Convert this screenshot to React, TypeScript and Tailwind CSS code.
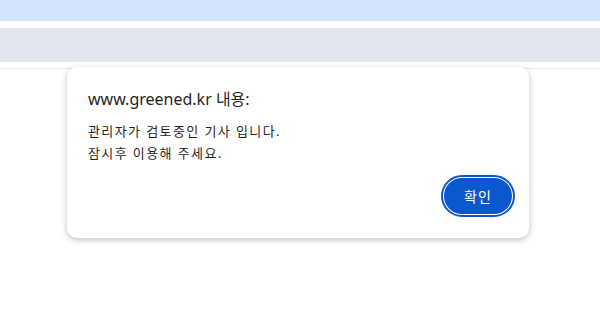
export default function App() {
  return (
    <div className="relative h-[317px] w-[600px] overflow-hidden bg-white font-['Noto_Sans','Noto_Sans_CJK_KR',sans-serif]">
      <div className="h-[21px] bg-[#d3e3fd]" />
      <div className="h-[7px] bg-white" />
      <div className="h-[34px] bg-[#e3e7ed]" />
      <div className="mt-[6px] h-px bg-[#e5e7eb]" />

      <div className="absolute left-[67px] top-[67px] flex h-[171px] w-[462px] flex-col rounded-[10px] bg-white px-[21px] pt-[21px] shadow-[0_2px_6px_rgba(0,0,0,0.25)]">
        <div className="text-[16px] leading-[22px] text-[#1f1f1f]">www.greened.kr 내용:</div>
        <div className="mt-[10px] text-[13px] leading-[22px] tracking-[1.4px] text-[#1f1f1f]">
          <div>관리자가 검토중인 기사 입니다.</div>
          <div>잠시후 이용해 주세요.</div>
        </div>
        <div className="mt-auto flex justify-end pb-[24px]">
          <button className="mr-[-4px] flex h-[36px] w-[68px] items-center justify-center rounded-full bg-[#0b57d0] text-[14px] tracking-[1px] text-white outline-2 outline-offset-1 outline-[#0b57d0]">
            확인
          </button>
        </div>
      </div>
    </div>
  );
}
